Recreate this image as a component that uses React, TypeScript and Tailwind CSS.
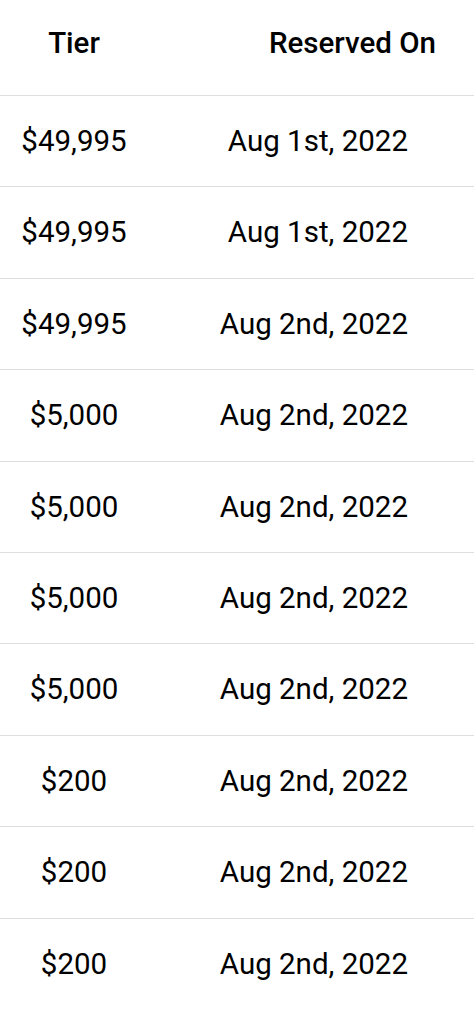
import React from "react";

const rows: [string, string][] = [
  ["$49,995", "Aug 1st, 2022"],
  ["$49,995", "Aug 1st, 2022"],
  ["$49,995", "Aug 2nd, 2022"],
  ["$5,000", "Aug 2nd, 2022"],
  ["$5,000", "Aug 2nd, 2022"],
  ["$5,000", "Aug 2nd, 2022"],
  ["$5,000", "Aug 2nd, 2022"],
  ["$200", "Aug 2nd, 2022"],
  ["$200", "Aug 2nd, 2022"],
  ["$200", "Aug 2nd, 2022"],
];

export default function App() {
  return (
    <div className="w-[474px] h-[1026px] overflow-hidden bg-white text-black font-['Roboto',sans-serif]">
      <div className="flex h-[96px] items-center border-b border-[#dedede] pb-[8px] text-[29.5px] font-medium">
        <div className="w-[148px] text-center">Tier</div>
        <div className="flex-1 text-right pr-[38px]">Reserved On</div>
      </div>
      {rows.map(([tier, date], i) => (
        <div
          key={i}
          className="flex h-[91.4px] items-center border-b border-[#dedede] last:border-b-0 text-[29.5px]"
        >
          <div className="w-[148px] text-center">{tier}</div>
          <div className="flex-1 text-right pr-[66px]">{date}</div>
        </div>
      ))}
    </div>
  );
}
